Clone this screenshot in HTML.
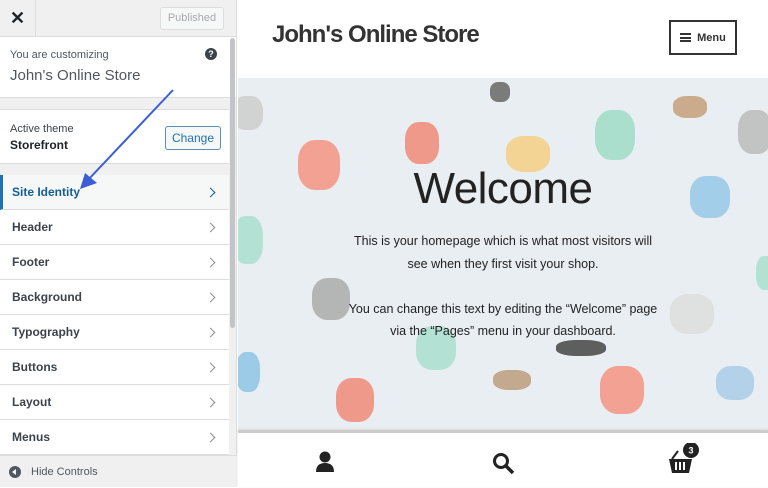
<!DOCTYPE html>
<html><head><meta charset="utf-8"><style>
*{box-sizing:border-box;margin:0;padding:0}
body{width:768px;height:487px;overflow:hidden;font-family:"Liberation Sans",sans-serif;position:relative;background:#fff}
#side{position:absolute;left:0;top:0;width:237px;height:487px;background:#f0f0f1;border-right:1px solid #ddd}
.top{height:37px;border-bottom:1px solid #ddd;position:relative}
.x{position:absolute;left:0;top:0;width:36px;height:36px;border-right:1px solid #ddd;font-size:18px;text-align:center;line-height:36px;color:#1d2327;font-weight:bold}
.pub{position:absolute;left:160px;top:7px;width:64px;height:23px;border:1px solid #ddd;background:#f6f7f7;color:#a7aaad;font-size:11px;text-align:center;line-height:21px;border-radius:3px}
.cust{background:#fff;height:61px;border-bottom:1px solid #ddd;padding:12px 10px;position:relative}
.cust .s{font-size:11px;color:#50575e}
.cust .b{font-size:15px;color:#50575e;margin-top:6px}
.q{position:absolute;left:205px;top:11px;width:12px;height:12px;border-radius:50%;background:#3c434a;color:#fff;font-size:9px;text-align:center;line-height:12px;font-weight:bold}
.theme{position:absolute;top:109px;left:0;width:229px;height:55px;background:#fff;border-top:1px solid #ddd;border-bottom:1px solid #ddd;padding:13px 10px}
.theme .s{font-size:11px;color:#3c434a}
.theme .b{font-size:12px;font-weight:bold;color:#1d2327;margin-top:3px}
.chg{position:absolute;left:165px;top:16px;width:56px;height:24px;border:1px solid #5d8fb5;border-radius:3px;background:#f6f7f7;color:#2271b1;font-size:12px;text-align:center;line-height:22px}
.menu{position:absolute;top:175px;left:0;width:229px}
.it{height:35px;background:#fff;border-bottom:1px solid #ddd;font-size:12px;font-weight:bold;color:#3c434a;padding-left:12px;line-height:35px;position:relative}
.it:after{content:"";position:absolute;right:15px;top:14px;width:6px;height:6px;border-top:1.5px solid #8c8f94;border-right:1.5px solid #8c8f94;transform:rotate(45deg)}
.it.a{color:#135e96;background:#f6f7f7;border-left:3px solid #2271b1;padding-left:9px}
.it.a:after{border-color:#135e96}
.scroll{position:absolute;left:230px;top:38px;width:5px;height:290px;background:#c3c4c7;border-radius:3px}
.hide{position:absolute;left:0;top:455px;width:237px;height:32px;border-top:1px solid #ddd;background:#f0f0f1;font-size:11px;color:#50575e;line-height:32px;padding-left:31px}
.hide:before{content:"";position:absolute;left:9px;top:10px;width:12px;height:12px;border-radius:50%;background:#50575e}
.hide:after{content:"";position:absolute;left:12px;top:13px;border:3px solid transparent;border-right:4px solid #fff;border-left:0}
#pv{position:absolute;left:238px;top:0;width:530px;height:487px}
.hd{height:78px;background:#fff;position:relative}
.title{position:absolute;left:34px;top:21px;font-size:24px;font-weight:bold;color:#333;letter-spacing:-1px}
.mbtn{position:absolute;left:431px;top:20px;width:68px;height:35px;border:2px solid #333;font-size:11px;font-weight:bold;color:#333;display:flex;align-items:center;justify-content:center;gap:6px}
.mbtn i{display:block;width:11px;height:9px;border-top:2px solid #333;border-bottom:2px solid #333;position:relative}
.mbtn i:after{content:"";position:absolute;left:0;top:1.5px;width:11px;height:2px;background:#333}
.hero{position:absolute;top:78px;left:0;width:530px;height:352px;background:#e9eef2;overflow:hidden}
.hero .c{position:absolute;border-radius:40%;opacity:.85}
.wel{position:absolute;top:86px;left:0;width:530px;text-align:center;font-size:44px;color:#222;letter-spacing:-.5px;-webkit-text-stroke:0}
.txt{position:absolute;top:152px;left:0;width:530px;text-align:center;font-size:12.5px;line-height:22.5px;color:#222}
.bar{position:absolute;top:430px;left:0;width:530px;height:57px;background:#fff;border-top:3px solid #ccc;box-shadow:0 -1px 2px #ddd}
</style></head><body>
<div id="side">
<div class="top"><div class="x">✕</div><div class="pub">Published</div></div>
<div class="cust"><div class="s">You are customizing</div><div class="b">John's Online Store</div><div class="q">?</div></div>
<div class="theme"><div class="s">Active theme</div><div class="b">Storefront</div><div class="chg">Change</div></div>
<div class="menu">
<div class="it a">Site Identity</div><div class="it">Header</div><div class="it">Footer</div><div class="it">Background</div><div class="it">Typography</div><div class="it">Buttons</div><div class="it">Layout</div><div class="it">Menus</div>
</div>
<div class="scroll"></div>
<div class="hide">Hide Controls</div>
<svg style="position:absolute;left:75px;top:85px" width="110" height="110"><line x1="98" y1="5" x2="12" y2="96" stroke="#3a5ed6" stroke-width="2"/><polygon points="5,104 10,88 22,98" fill="#3a5ed6"/></svg>
</div>
<div id="pv">
<div class="hd"><div class="title">John's Online Store</div><div class="mbtn"><i></i>Menu</div></div>
<div class="hero">
<div class="c" style="left:-5px;top:18px;width:30px;height:34px;background:#ccc"></div>
<div class="c" style="left:167px;top:44px;width:34px;height:42px;background:#f08a78"></div>
<div class="c" style="left:252px;top:4px;width:20px;height:20px;background:#666"></div>
<div class="c" style="left:268px;top:58px;width:44px;height:36px;background:#f4cf85"></div>
<div class="c" style="left:357px;top:32px;width:40px;height:50px;background:#9fdcc8"></div>
<div class="c" style="left:435px;top:18px;width:34px;height:22px;background:#c4a07a"></div>
<div class="c" style="left:500px;top:32px;width:34px;height:44px;background:#bbb"></div>
<div class="c" style="left:60px;top:62px;width:42px;height:50px;background:#f39383"></div>
<div class="c" style="left:-5px;top:138px;width:30px;height:48px;background:#a9dfcf"></div>
<div class="c" style="left:452px;top:98px;width:40px;height:42px;background:#95c8e8"></div>
<div class="c" style="left:518px;top:178px;width:20px;height:34px;background:#a9dfcf"></div>
<div class="c" style="left:74px;top:200px;width:38px;height:42px;background:#aaa"></div>
<div class="c" style="left:432px;top:216px;width:44px;height:40px;background:#ddd"></div>
<div class="c" style="left:178px;top:248px;width:40px;height:44px;background:#a9dfcf"></div>
<div class="c" style="left:318px;top:262px;width:50px;height:16px;background:#444"></div>
<div class="c" style="left:255px;top:292px;width:38px;height:20px;background:#bc9d7c"></div>
<div class="c" style="left:98px;top:300px;width:38px;height:44px;background:#f08a78"></div>
<div class="c" style="left:362px;top:288px;width:44px;height:48px;background:#f39383"></div>
<div class="c" style="left:478px;top:288px;width:38px;height:34px;background:#a9cde8"></div>
<div class="c" style="left:-2px;top:274px;width:24px;height:40px;background:#8ec4e6"></div>
<div class="wel">Welcome</div>
<div class="txt">This is your homepage which is what most visitors will<br>see when they first visit your shop.<br><br>You can change this text by editing the “Welcome” page<br>via the “Pages” menu in your dashboard.</div>
</div>
<div class="bar">
<svg style="position:absolute;left:77px;top:18px" width="20" height="22"><circle cx="10" cy="6" r="5.5" fill="#222"/><path d="M1 21 Q1 12 10 12 Q19 12 19 21Z" fill="#222"/></svg>
<svg style="position:absolute;left:254px;top:19px" width="24" height="24"><circle cx="9" cy="9" r="6.5" fill="none" stroke="#222" stroke-width="3"/><line x1="14" y1="14" x2="21" y2="21" stroke="#222" stroke-width="3.5"/></svg>
<svg style="position:absolute;left:428px;top:10px" width="40" height="34"><path d="M6 16 L12 8" stroke="#222" stroke-width="2"/><path d="M3 16 H26 L23 30 H6Z" fill="#222"/><rect x="9" y="19" width="2" height="8" fill="#fff"/><rect x="13" y="19" width="2" height="8" fill="#fff"/><rect x="17" y="19" width="2" height="8" fill="#fff"/><circle cx="25" cy="7" r="8" fill="#222"/><text x="25" y="10.5" font-size="9" font-weight="bold" fill="#fff" text-anchor="middle" font-family="Liberation Sans">3</text></svg>
</div>
</div>
</body></html>
